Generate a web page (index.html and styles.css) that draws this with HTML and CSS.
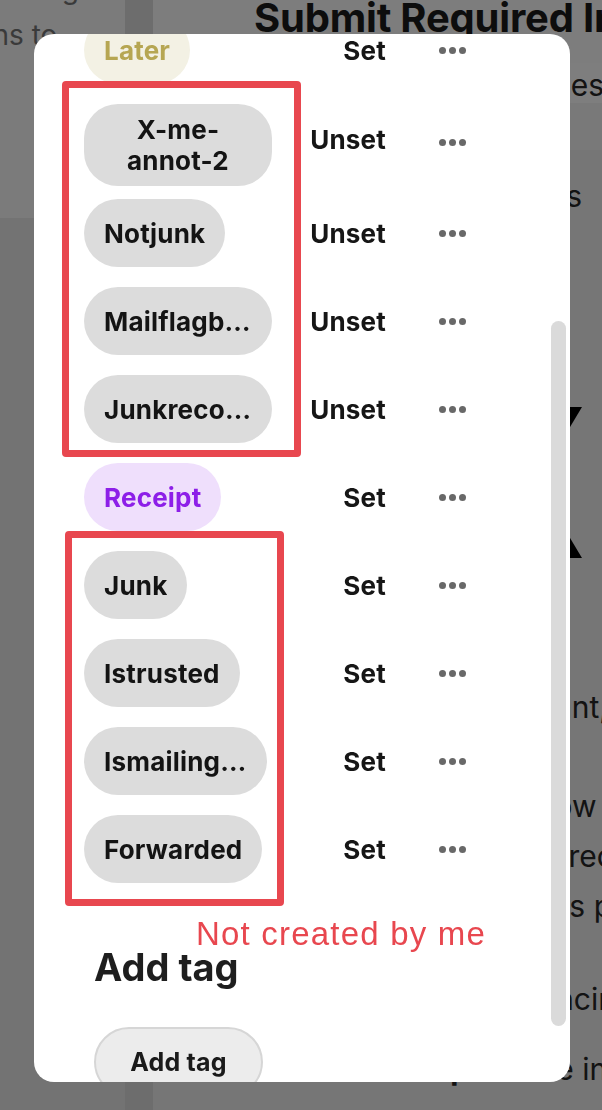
FILE: index.html
```html
<!DOCTYPE html>
<html lang="en">
<head>
<meta charset="utf-8">
<title>Tags</title>
<link rel="stylesheet" href="styles.css">
</head>
<body>
  <aside class="sidebar">
    <div class="sidebar-top">
      <div class="side-line side-line-1">using the</div>
      <div class="side-line side-line-2">actions to</div>
    </div>
  </aside>
  <div class="rail"></div>
  <main class="main">
    <header class="page-head">
      <h1 class="page-title">Submit Required Information</h1>
    </header>
    <div class="band"><span class="frag">Categories</span></div>
    <div class="strip"></div>
    <section class="hero">
      <div class="hero-line">Labels</div>
      <svg class="hero-art" width="449" height="381" viewBox="0 0 449 381">
        <polygon points="429,188 377,188 377,275" fill="#000"/>
        <polygon points="429,339 377,339 377,252" fill="#000"/>
      </svg>
    </section>
    <div class="text-block">
      <div class="tline t1">is important,</div>
      <div class="tline t2">follow (</div>
      <div class="tline t3">are rec</div>
      <div class="tline t4">fields p</div>
      <div class="tline t5">replacin</div>
      <div class="tline t6"><b>Tuup:</b> Fucce in</div>
    </div>
  </main>

  <div class="overlay"></div>

  <div class="modal">
    <div class="modal-body">
      <div class="tag-list">
        <div class="row row-later">
          <div class="pill-cell"><span class="pill pill-later"><span class="pill-text">Later</span></span></div>
          <span class="status">Set</span>
          <span class="more"><i></i><i></i><i></i></span>
        </div>
        <div class="row row-tall">
          <div class="pill-cell"><span class="pill"><span class="pill-text">X-me-annot-2</span></span></div>
          <span class="status">Unset</span>
          <span class="more"><i></i><i></i><i></i></span>
        </div>
        <div class="row">
          <div class="pill-cell"><span class="pill"><span class="pill-text">Notjunk</span></span></div>
          <span class="status">Unset</span>
          <span class="more"><i></i><i></i><i></i></span>
        </div>
        <div class="row">
          <div class="pill-cell"><span class="pill"><span class="pill-text">Mailflagbit0</span></span></div>
          <span class="status">Unset</span>
          <span class="more"><i></i><i></i><i></i></span>
        </div>
        <div class="row">
          <div class="pill-cell"><span class="pill"><span class="pill-text">Junkrecorded</span></span></div>
          <span class="status">Unset</span>
          <span class="more"><i></i><i></i><i></i></span>
        </div>
        <div class="row">
          <div class="pill-cell"><span class="pill pill-receipt"><span class="pill-text">Receipt</span></span></div>
          <span class="status">Set</span>
          <span class="more"><i></i><i></i><i></i></span>
        </div>
        <div class="row">
          <div class="pill-cell"><span class="pill"><span class="pill-text">Junk</span></span></div>
          <span class="status">Set</span>
          <span class="more"><i></i><i></i><i></i></span>
        </div>
        <div class="row">
          <div class="pill-cell"><span class="pill"><span class="pill-text">Istrusted</span></span></div>
          <span class="status">Set</span>
          <span class="more"><i></i><i></i><i></i></span>
        </div>
        <div class="row">
          <div class="pill-cell"><span class="pill"><span class="pill-text">Ismailing…</span></span></div>
          <span class="status">Set</span>
          <span class="more"><i></i><i></i><i></i></span>
        </div>
        <div class="row">
          <div class="pill-cell"><span class="pill"><span class="pill-text">Forwarded</span></span></div>
          <span class="status">Set</span>
          <span class="more"><i></i><i></i><i></i></span>
        </div>
      </div>
      <div class="add-section">
        <h2 class="add-title">Add tag</h2>
        <button class="add-btn" type="button">Add tag</button>
      </div>
    </div>
    <div class="scrollbar"></div>
  </div>

  <div class="annot-box annot-box-1"></div>
  <div class="annot-box annot-box-2"></div>
  <div class="annot-note">Not created by me</div>
</body>
</html>
```

FILE: styles.css
```css
* { box-sizing: border-box; }
html, body { margin: 0; padding: 0; }
body {
  width: 602px;
  height: 1110px;
  overflow: hidden;
  display: flex;
  font-family: Inter, "Noto Sans", "Liberation Sans", sans-serif;
  background: #ececec;
}

/* ---------- background page ---------- */
.sidebar {
  width: 125px;
  flex: none;
  background: #e6e6e6;
}
.sidebar-top {
  height: 218px;
  background: #f6f6f6;
  overflow: hidden;
  font-size: 28px;
  line-height: 46px;
  color: #747474;
  white-space: nowrap;
}
.side-line-1 { margin-top: -34px; padding-left: 7px; }
.side-line-2 { margin-left: -72px; }

.rail {
  width: 28px;
  flex: none;
  background: #dadada;
}
.main {
  flex: 1;
  min-width: 0;
  background: #ececec;
  color: #262626;
  font-size: 30px;
  white-space: nowrap;
}
.page-head {
  height: 63px;
  background: #fafafa;
  overflow: hidden;
}
.page-title {
  margin: -5px 0 0;
  padding-left: 101px;
  font-size: 40px;
  line-height: 46px;
  font-weight: 700;
  color: #1a1a1a;
  letter-spacing: -0.2px;
}
.band {
  height: 40px;
  line-height: 44px;
  background: #fdfdfd;
  text-align: right;
  margin-right: -2px;
  overflow: hidden;
}
.strip {
  height: 47px;
  background: #f3f3f3;
}
.hero {
  height: 450px;
  padding-top: 23px;
  background: #ececec;
}
.hero-line {
  height: 46px;
  line-height: 46px;
  text-align: right;
  padding-right: 20px;
}
.hero-art { display: block; }

.text-block { padding-top: 82px; }
.tline {
  height: 50px;
  line-height: 50px;
  text-align: right;
}
.t1 { margin-right: -6px; }
.t2 { margin-top: 49px; margin-right: -14px; }
.t3 { margin-right: -12px; }
.t4 { margin-right: -10px; }
.t5 { margin-top: 43px; margin-right: -14px; }
.t6 { margin-top: 20px; text-align: left; padding-left: 242px; }

/* ---------- dim overlay ---------- */
.overlay {
  position: fixed;
  inset: 0;
  background: rgba(0, 0, 0, 0.5);
}

/* ---------- modal ---------- */
.modal {
  position: fixed;
  left: 34px;
  top: 34px;
  width: 536px;
  height: 1048px;
  background: #fff;
  border-radius: 20px;
  overflow: hidden;
  color: #161616;
}
.modal-body {
  padding-left: 50px;
}
.tag-list {
  display: flex;
  flex-direction: column;
  gap: 20px;
  margin-top: -18px;
}
.row {
  display: flex;
  align-items: center;
}
.row-tall { margin-bottom: -7px; }
.row-tall .status { margin-bottom: 12px; }
.row-tall .more { margin-bottom: 6px; }

.pill-cell {
  width: 188px;
  flex: none;
  display: flex;
}
.pill {
  display: flex;
  align-items: center;
  min-width: 0;
  min-height: 68px;
  padding: 10px 20px;
  border-radius: 34px;
  background: #dcdcdc;
  font-size: 26px;
  line-height: 31px;
  font-weight: 700;
  letter-spacing: 0.2px;
  color: #141414;
  text-align: center;
}
.pill-text {
  display: block;
  min-width: 0;
  overflow: hidden;
  text-overflow: ellipsis;
}
.pill-later {
  background: #f3f1e4;
  color: #b6a652;
}
.pill-receipt {
  background: #efdffc;
  color: #8d1fe8;
}
.status {
  width: 114px;
  flex: none;
  text-align: right;
  font-size: 26px;
  font-weight: 700;
  letter-spacing: 0.2px;
  color: #161616;
}
.more {
  margin-left: 53px;
  display: flex;
  gap: 3px;
}
.more i {
  width: 7px;
  height: 7px;
  border-radius: 50%;
  background: #686868;
}

.add-section {
  padding-left: 10px;
  margin-top: 62px;
}
.add-title {
  margin: 0;
  font-size: 38px;
  line-height: 45px;
  font-weight: 700;
  color: #1e1e1e;
}
.add-btn {
  margin-top: 37px;
  width: 169px;
  height: 70px;
  border-radius: 35px;
  border: 2px solid #d6d6d6;
  background: #ececec;
  font-family: Inter, "Noto Sans", sans-serif;
  font-size: 25px;
  font-weight: 700;
  letter-spacing: 0.2px;
  color: #1a1a1a;
  padding: 0;
}

.scrollbar {
  position: absolute;
  right: 4px;
  top: 287px;
  width: 15px;
  height: 705px;
  border-radius: 8px;
  background: #dadada;
}

/* ---------- red annotations ---------- */
.annot-box {
  position: fixed;
  border: 7px solid #e8474f;
  border-radius: 4px;
}
.annot-box-1 { left: 62px; top: 81px; width: 239px; height: 376px; }
.annot-box-2 { left: 65px; top: 531px; width: 219px; height: 375px; }
.annot-note {
  position: fixed;
  left: 196px;
  top: 915px;
  font-family: "Liberation Sans", Arial, sans-serif;
  font-size: 33px;
  line-height: 37px;
  letter-spacing: 1.2px;
  color: #e8474f;
  white-space: nowrap;
}
```
